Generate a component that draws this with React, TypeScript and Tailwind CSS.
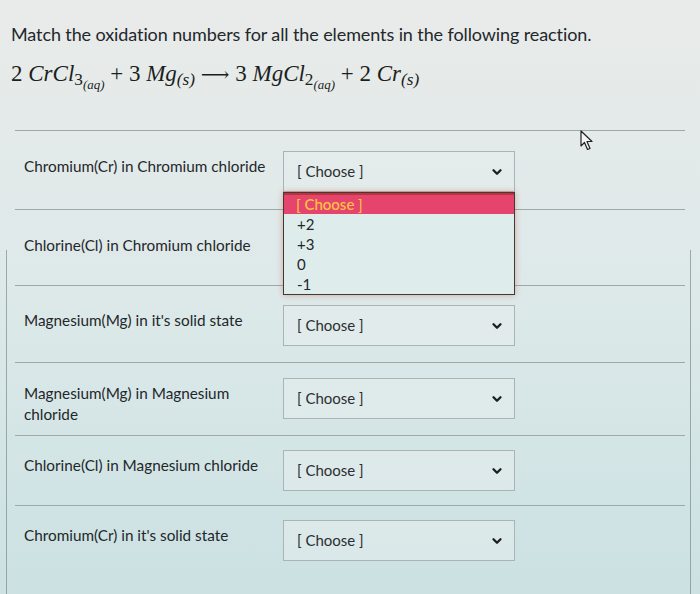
import { ChevronDown } from "lucide-react";

const rows = [
  { linhas: ["Chromium(Cr) in Chromium chloride"], altura: "h-[79px]", topo: "pt-[20px]" },
  { linhas: ["Chlorine(Cl) in Chromium chloride"], altura: "h-[76px]", topo: "pt-[20px]" },
  { linhas: ["Magnesium(Mg) in it's solid state"], altura: "h-[77px]", topo: "pt-[19px]" },
  { linhas: ["Magnesium(Mg) in Magnesium", "chloride"], altura: "h-[73px]", topo: "pt-[15px]" },
  { linhas: ["Chlorine(Cl) in Magnesium chloride"], altura: "h-[70px]", topo: "pt-[14px]" },
  { linhas: ["Chromium(Cr) in it's solid state"], altura: "h-[89px]", topo: "pt-[14px]" },
];

const opcoes = ["+2", "+3", "0", "-1"];

function Seletor({ vazio = false }: { vazio?: boolean }) {
  if (vazio) return <div className="w-[232px] h-[41px]" />;
  return (
    <div className="w-[232px] h-[41px] border border-[#a9b4b4] bg-[#e4eded]/60 flex items-center pl-[13px] pr-[10px] text-[15px] text-[#2b2f31]">
      <span>[ Choose ]</span>
      <ChevronDown className="ml-auto text-[#1d1f20]" size={14} strokeWidth={4} />
    </div>
  );
}

function Cursor() {
  return (
    <svg className="absolute left-[580px] top-[130px]" width="14" height="22" viewBox="0 0 14 22">
      <path d="M1 1 L1 16 L4.5 12.5 L7.5 19.5 L10 18.5 L7 11.5 L12 11.5 Z" fill="#f4f6f6" stroke="#222" strokeWidth="1.2" strokeLinejoin="round" />
    </svg>
  );
}

export default function App() {
  return (
    <div className="relative w-[700px] h-[594px] overflow-hidden bg-linear-to-b from-[#e9ebea] via-[#dde9e9] to-[#cbe1e2] font-['Lato',sans-serif] text-[#23272a]">
      <div className="pl-[11px] pt-[22px]">
        <h1 className="text-[18px] leading-[24px] tracking-[-0.1px]">
          Match the oxidation numbers for all the elements in the following reaction.
        </h1>
        <p className="mt-[14px] text-[23px] leading-[28px] font-['Liberation_Serif','DejaVu_Serif',serif] text-[#1c1f21]">
          2 <i>CrCl</i><sub>3<sub><i>(aq)</i></sub></sub> + 3 <i>Mg</i><sub><i>(s)</i></sub>{" "}
          <span className="font-['DejaVu_Serif',serif] text-[20px]">⟶</span> 3 <i>MgCl</i>
          <sub>2<sub><i>(aq)</i></sub></sub> + 2 <i>Cr</i><sub><i>(s)</i></sub>
        </p>
      </div>

      <div className="absolute left-[6px] right-[9px] top-[250px] bottom-0 border-l border-r border-[#6f7c7d]/60" />

      <div className="mt-[42px] mx-[15px] relative">
        {rows.map((r, i) => (
          <div key={i} className={`border-t border-[#9fa8a7] flex items-start ${r.altura} ${r.topo}`}>
            <div className="w-[268px] pl-[9px] pt-[5px] text-[15.3px] leading-[21px]">
              {r.linhas.map((l) => (
                <div key={l}>{l}</div>
              ))}
            </div>
            <div className="relative">
              <Seletor vazio={i === 1} />
              {i === 0 && (
                <div className="absolute left-0 top-[41px] z-10 w-[232px] border border-[#3e3a3a] bg-[#dfecec] shadow-[0_0_6px_rgba(200,80,60,0.45)] text-[15px] leading-[20px]">
                  <div className="h-[21px] bg-[#e5456d] border-t-2 border-[#c2303a] pl-[12px] text-[#ffc43f] font-medium leading-[19px]">
                    [ Choose ]
                  </div>
                  {opcoes.map((o) => (
                    <div key={o} className="pl-[13px] text-[#23272a]">
                      {o}
                    </div>
                  ))}
                </div>
              )}
            </div>
          </div>
        ))}
      </div>

      <Cursor />
    </div>
  );
}
